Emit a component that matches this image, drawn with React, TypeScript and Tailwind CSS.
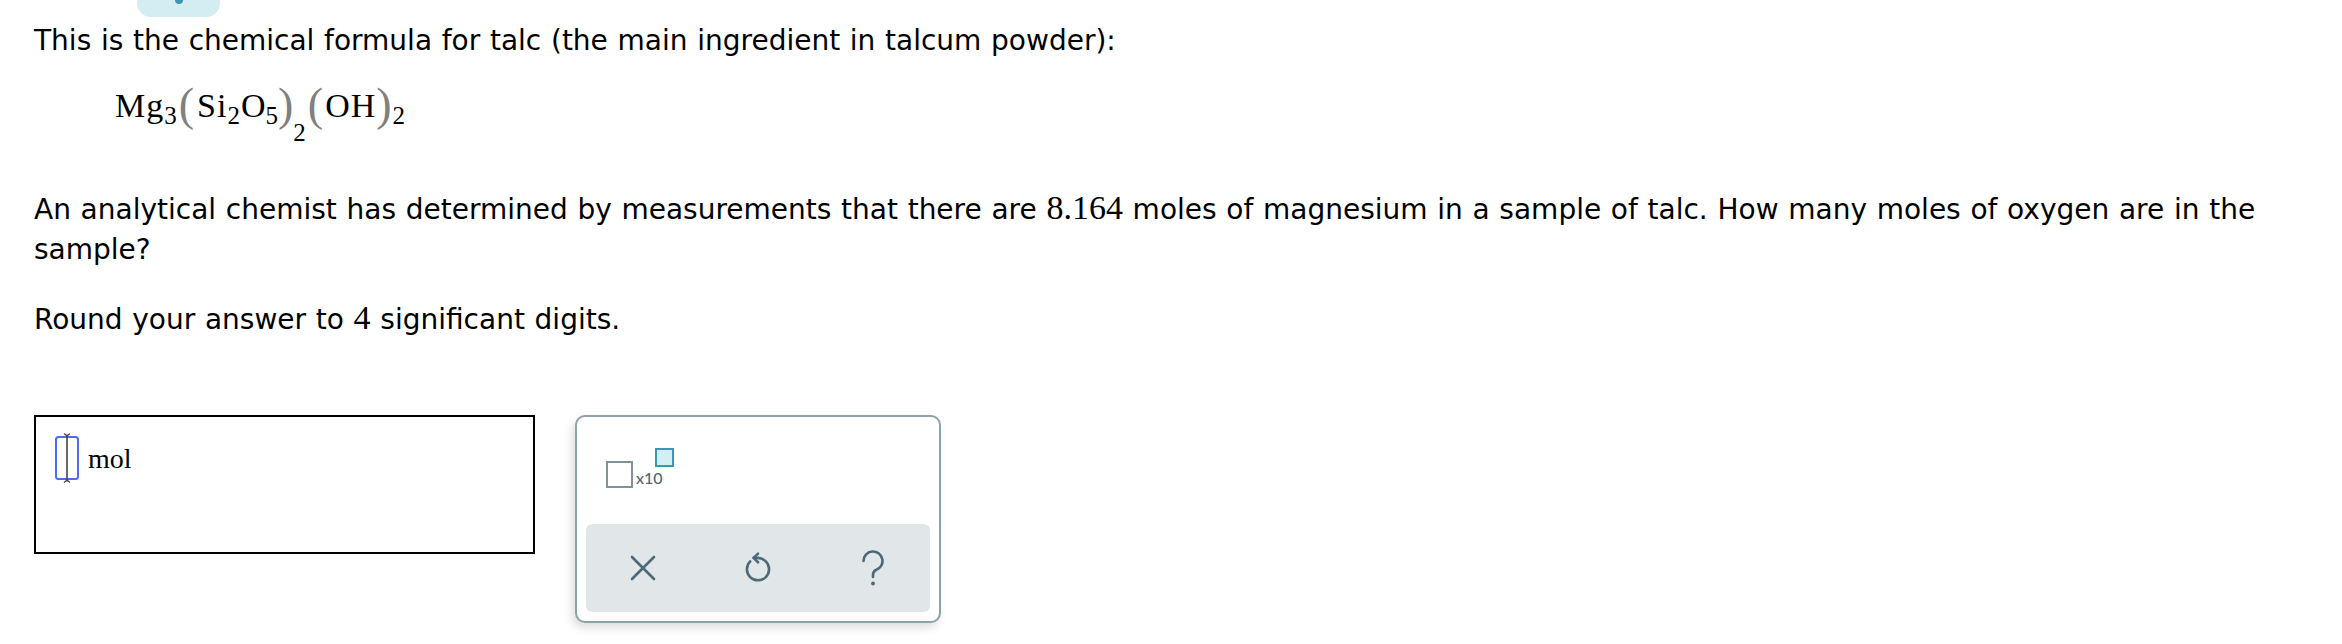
import { ReactNode } from "react"

const serif = "font-['Liberation_Serif','Times_New_Roman',serif]"

function Sub({ children, low = false }: { children: ReactNode; low?: boolean }) {
  return (
    <span
      className={`relative text-[25px] leading-[0] ${low ? "top-[24px]" : "top-[7px]"}`}
    >
      {children}
    </span>
  )
}

function Paren({ children }: { children: ReactNode }) {
  return (
    <span className="relative top-[3px] text-[46px] leading-[0] text-[#808080]">
      {children}
    </span>
  )
}

function Cursor() {
  return (
    <svg width="24" height="50" viewBox="0 0 24 50" fill="none">
      <rect x="1" y="4" width="22" height="42" rx="2.5" stroke="#4b6cf6" strokeWidth="2" />
      <path d="M12 1.5v47" stroke="#444" strokeWidth="1.6" />
      <path d="M9 0.5l3 2.5 3-2.5M9 49.5l3-2.5 3 2.5" stroke="#444" strokeWidth="1.2" />
    </svg>
  )
}

function IconX() {
  return (
    <svg width="26" height="26" viewBox="0 0 26 26" fill="none">
      <path d="M2 2l22 22M24 2L2 24" stroke="#4b6976" strokeWidth="2.6" strokeLinecap="round" />
    </svg>
  )
}

function IconUndo() {
  return (
    <svg width="30" height="32" viewBox="0 -2 24 26" fill="none">
      <g
        transform="rotate(45 12 12)"
        stroke="#4b6976"
        strokeWidth="2.1"
        strokeLinecap="round"
        strokeLinejoin="round"
      >
        <path d="M3 12a9 9 0 1 0 9-9 9.75 9.75 0 0 0-6.74 2.74L3 8" />
        <path d="M3 3v5h5" />
      </g>
    </svg>
  )
}

function IconHelp() {
  return (
    <svg width="24" height="37" viewBox="0 0 24 37" fill="none">
      <path
        d="M2.5 11A9.5 9.5 0 1 1 15 20c-2 1-3 2.5-3 5v2"
        stroke="#4b6976"
        strokeWidth="2.6"
        strokeLinecap="round"
      />
      <circle cx="12" cy="33.5" r="1.9" fill="#4b6976" />
    </svg>
  )
}

export default function App() {
  return (
    <main className="min-h-screen bg-white px-[34px] text-black font-['DejaVu_Sans',Verdana,sans-serif] text-[28px] leading-[40px] [word-spacing:0.8px]">
      {/* cut-off tab at the very top */}
      <div className="ml-[103px] flex h-[17px] w-[83px] justify-center rounded-b-[14px] bg-[#d3edf3]">
        <div className="h-[4px] w-[8px] rounded-b-full bg-[#3d97b2]" />
      </div>

      <p className="mt-[4px]">
        This is the chemical formula for talc (the main ingredient in talcum powder):
      </p>

      {/* Formula */}
      <div className={`ml-[81px] mt-[25px] h-[40px] whitespace-nowrap text-[34px] leading-[40px] [word-spacing:0] ${serif}`}>
        <span className="tracking-[1px]">Mg</span>
        <Sub>3</Sub>
        <span className="ml-[2px]" />
        <Paren>(</Paren>
        <span className="ml-[3px] tracking-[1px]">Si</span>
        <Sub>2</Sub>
        <span className="ml-[1px]">O</span>
        <Sub>5</Sub>
        <Paren>)</Paren>
        <Sub low>2</Sub>
        <span className="ml-[2px]" />
        <Paren>(</Paren>
        <span className="ml-[2px] tracking-[1px]">OH</span>
        <Paren>)</Paren>
        <span className="ml-[1px]" />
        <Sub>2</Sub>
      </div>

      <p className="mt-[64px]">
        An analytical chemist has determined by measurements that there are{" "}
        <span className={`text-[34px] leading-none ${serif}`}>8.164</span> moles of
        magnesium in a sample of talc. How many moles of oxygen are in the sample?
      </p>

      <p className="mt-[30px]">
        Round your answer to{" "}
        <span className={`text-[34px] leading-none ${serif}`}>4</span> significant
        digits.
      </p>

      {/* Answer area */}
      <div className="mt-[75px] flex items-start gap-[40px] [word-spacing:0]">
        <div className="flex h-[139px] w-[501px] items-start border-2 border-black pl-[19px] pt-[16px]">
          <Cursor />
          <span className={`ml-[9px] mt-[12px] text-[28px] leading-[28px] ${serif}`}>mol</span>
        </div>

        <div className="flex h-[208px] w-[366px] flex-col rounded-[10px] border-2 border-[#8ea2aa] bg-white p-[9px] shadow-[-3px_5px_10px_rgba(0,0,0,0.13)]">
          <div className="h-[98px]">
            <div className="ml-[20px] mt-[22px] flex items-start">
              <div className="mt-[13px] h-[27px] w-[27px] border-2 border-[#7f9298]" />
              <span className="ml-[3px] mt-[22px] font-['Lato',sans-serif] text-[16px] font-medium leading-[16px] text-[#506872]">
                x10
              </span>
              <div className="-ml-[8px] h-[19px] w-[19px] border-2 border-[#3d97b2] bg-[#d4eef4]" />
            </div>
          </div>
          <div className="grid h-[88px] grid-cols-3 items-center justify-items-center rounded-[6px] bg-[#e1e6e9]">
            <IconX />
            <IconUndo />
            <IconHelp />
          </div>
        </div>
      </div>
    </main>
  )
}
